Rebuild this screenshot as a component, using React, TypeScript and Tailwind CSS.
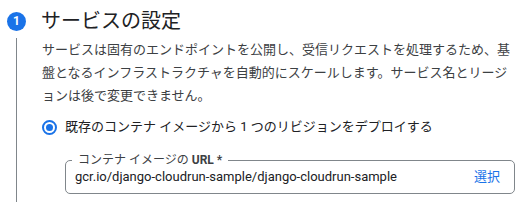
export default function App() {
  return (
    <div className="w-[531px] h-[202px] overflow-hidden bg-white font-['Roboto','Noto_Sans_CJK_JP',sans-serif]">
      <div className="flex h-[38px] items-center pt-[4px]">
        <span className="ml-[7px] flex h-[19px] w-[19px] items-center justify-center rounded-full bg-[#1a73e8] text-[12px] font-bold text-white">
          1
        </span>
        <h2 className="ml-[15px] text-[20px] leading-[28px] text-[#202124]">
          サービスの設定
        </h2>
      </div>
      <div className="ml-[16px] h-[164px] border-l border-[#80868b] pl-[25px]">
        <p className="w-[474px] text-[13px] leading-[23px] text-[#3c4043]">
          サービスは固有のエンドポイントを公開し、受信リクエストを処理するため、基盤となるインフラストラクチャを自動的にスケールします。サービス名とリージョンは後で変更できません。
        </p>
        <label className="mt-[10px] flex h-[20px] items-center">
          <span className="flex h-[15px] w-[15px] items-center justify-center rounded-full border-2 border-[#1a73e8]">
            <span className="h-[7px] w-[7px] rounded-full bg-[#1a73e8]" />
          </span>
          <span className="ml-[8px] text-[13px] text-[#202124]">
            既存のコンテナ イメージから 1 つのリビジョンをデプロイする
          </span>
        </label>
        <div className="relative ml-[23px] mt-[23px] flex h-[34px] w-[450px] items-center justify-between rounded-[5px] border border-[#80868b] pl-[9px] pr-[14px]">
          <span className="absolute left-[6px] top-[-9px] bg-white px-[6px] text-[12px] leading-[16px] text-[#3c4043]">
            コンテナ イメージの <span className="font-bold">URL *</span>
          </span>
          <span className="text-[13px] text-[#202124]">
            gcr.io/django-cloudrun-sample/django-cloudrun-sample
          </span>
          <button className="text-[13px] text-[#1a73e8]">選択</button>
        </div>
      </div>
    </div>
  );
}
